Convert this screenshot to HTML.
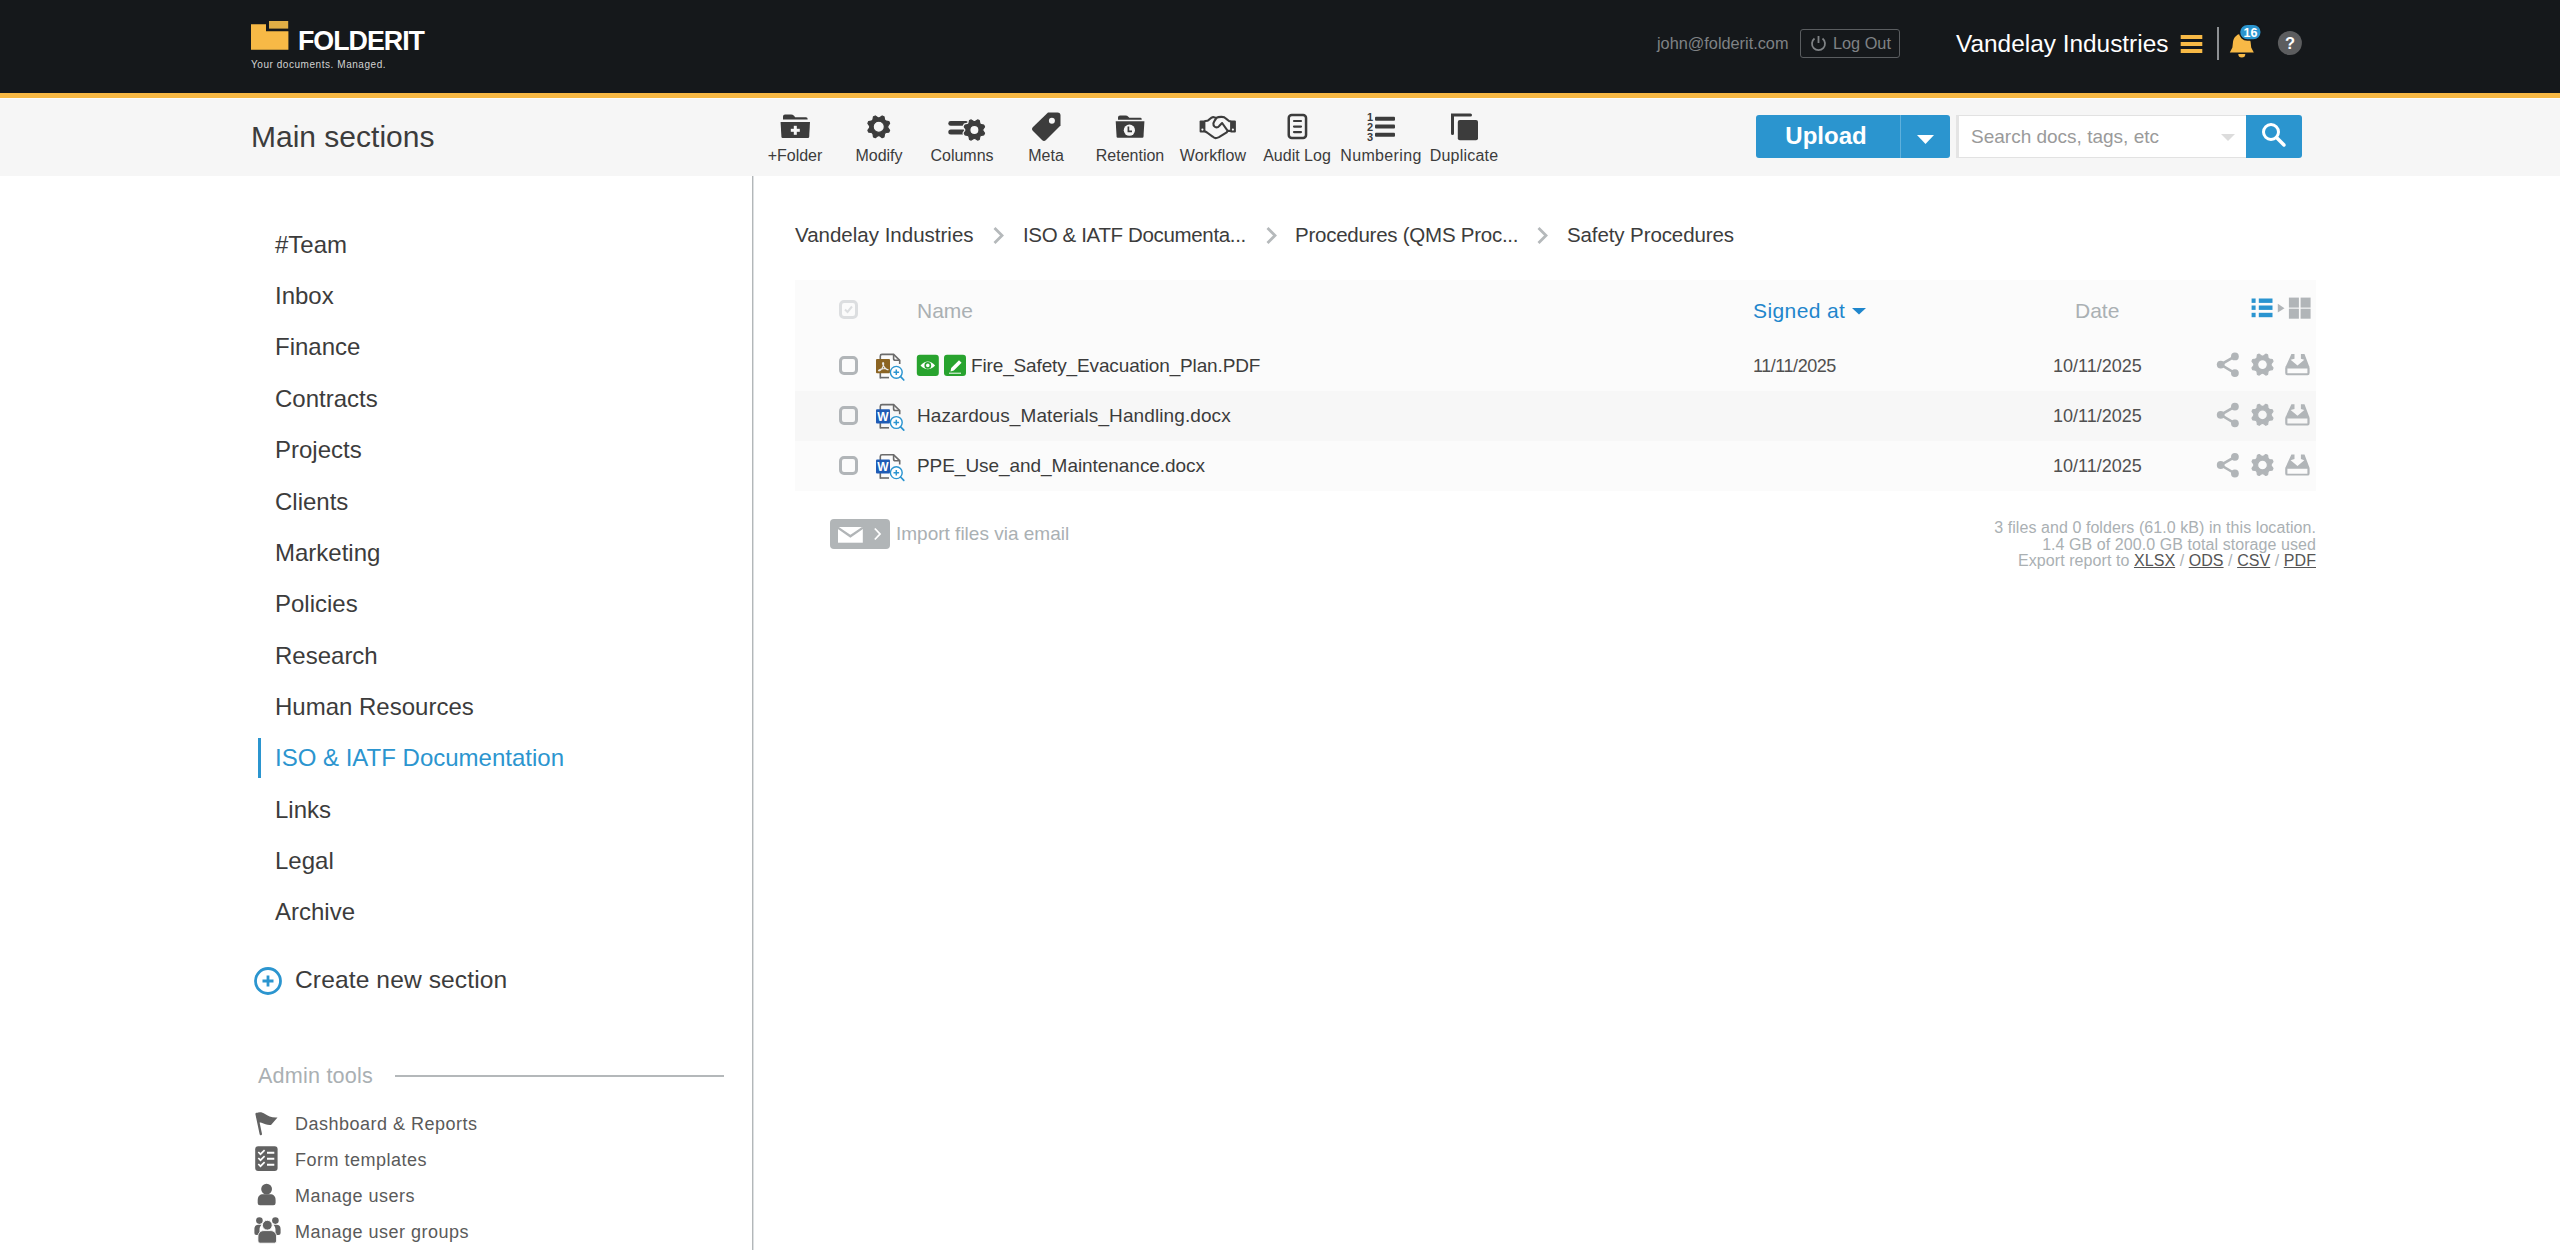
<!DOCTYPE html>
<html><head><meta charset="utf-8">
<style>
*{margin:0;padding:0;box-sizing:border-box}
html,body{width:2560px;height:1250px;overflow:hidden;background:#fff;font-family:"Liberation Sans",sans-serif;color:#3c3c3c}
.abs{position:absolute;white-space:pre}
#hdr{position:absolute;left:0;top:0;width:2560px;height:93px;background:#15181b}
#stripe{position:absolute;left:0;top:93px;width:2560px;height:5px;background:#f7b843}
#stripe2{position:absolute;left:0;top:98px;width:2560px;height:1px;background:#fbfdfd}
#tb{position:absolute;left:0;top:99px;width:2560px;height:77px;background:#f6f6f6}
#vdiv{position:absolute;left:752px;top:176px;width:2px;height:1074px;background:linear-gradient(90deg,#b3b7b9 50%,#dde0e2 50%)}
.side{position:absolute;left:275px;font-size:24px;line-height:30px;color:#3c3c3c;white-space:pre}
.tbl{position:absolute;font-size:16px;line-height:20px;color:#3c3c3c;text-align:center;width:84px;top:146px}
.tbi{position:absolute;top:108px;width:40px;height:36px}

.adm{left:295px;font-size:18px;line-height:24px;color:#5a5a5a;letter-spacing:0.5px}
.bc{top:223px;font-size:20.5px;line-height:24px;color:#3c3c3c}
.chev{top:226px;width:13px;height:19px}
.th{top:299px;font-size:21px;line-height:24px;color:#aab0b3}
.cb{left:839px;width:19px;height:19px;border:3px solid #b1b5b8;border-radius:5px}
.fn{font-size:19px;line-height:22px;color:#3c3c3c}
.dt{font-size:18px;line-height:22px;color:#505050}
.st{right:244px;text-align:right;font-size:16px;line-height:18px;color:#aab0b3;letter-spacing:0.07px}
.st u{color:#555;text-decoration:underline}
</style></head><body>
<div id="hdr"></div><div id="stripe"></div><div id="stripe2"></div><div id="tb"></div><div id="vdiv"></div>

<!-- logo -->
<div class="abs" style="left:298px;top:25px;font-size:26.8px;font-weight:700;color:#fff;line-height:32px;letter-spacing:-1px">FOLDERIT</div>
<div class="abs" style="left:251px;top:59px;font-size:10px;color:#d2d2d2;line-height:12px;letter-spacing:0.55px">Your documents. Managed.</div>

<!-- header right -->
<div class="abs" style="left:1657px;top:33px;font-size:16.3px;color:#7f8285;line-height:20px">john@folderit.com</div>
<div class="abs" style="left:1800px;top:29px;width:100px;height:29px;border:1.5px solid #5a5d60;border-radius:3px"></div>
<svg class="abs" style="left:1809px;top:34px" width="19" height="19" viewBox="0 0 19 19"><path d="M5.5 4.5A6.5 6.5 0 1 0 13.5 4.5" fill="none" stroke="#7f8285" stroke-width="1.8"/><path d="M9.5 2V9" stroke="#7f8285" stroke-width="1.8"/></svg>
<div class="abs" style="left:1833px;top:33px;font-size:16.3px;color:#7f8285;line-height:20px">Log Out</div>
<div class="abs" style="left:1956px;top:29px;font-size:24.4px;color:#fff;line-height:30px">Vandelay Industries</div>
<div class="abs" style="left:2217px;top:27px;width:1.5px;height:33px;background:#8d9093"></div>

<!-- toolbar -->
<div class="abs" style="left:251px;top:119px;font-size:30px;line-height:36px;color:#3c3c3c">Main sections</div>

<div class="tbl" style="left:753px">+Folder</div>
<div class="tbl" style="left:837px">Modify</div>
<div class="tbl" style="left:920px">Columns</div>
<div class="tbl" style="left:1004px">Meta</div>
<div class="tbl" style="left:1088px">Retention</div>
<div class="tbl" style="left:1171px;letter-spacing:0.1px">Workflow</div>
<div class="tbl" style="left:1255px">Audit Log</div>
<div class="tbl" style="left:1339px;letter-spacing:0.35px">Numbering</div>
<div class="tbl" style="left:1422px;letter-spacing:0.2px">Duplicate</div>

<!-- upload/search -->
<div class="abs" style="left:1756px;top:115px;width:194px;height:43px;background:#2b95cf;border-radius:3px"></div>
<div class="abs" style="left:1900px;top:115px;width:1px;height:43px;background:#5fb0dc"></div>
<div class="abs" style="left:1754px;top:121px;width:144px;text-align:center;font-size:24px;font-weight:700;color:#fff;line-height:30px">Upload</div>
<svg class="abs" style="left:1917px;top:135px" width="17" height="10" viewBox="0 0 17 10"><path d="M0 0H17L8.5 9Z" fill="#fff"/></svg>
<div class="abs" style="left:1956px;top:115px;width:291px;height:43px;background:#fff;border:1px solid #e2e2e2;border-left:3px solid #e4e4e4"></div>
<div class="abs" style="left:1971px;top:125px;font-size:19px;color:#9a9a9a;line-height:24px">Search docs, tags, etc</div>
<svg class="abs" style="left:2221px;top:134px" width="14" height="8" viewBox="0 0 14 8"><path d="M0 0H14L7 7Z" fill="#dcdcdc"/></svg>
<div class="abs" style="left:2246px;top:115px;width:56px;height:43px;background:#2b95cf;border-radius:0 3px 3px 0"></div>
<svg class="abs" style="left:2260px;top:121px" width="28" height="28" viewBox="0 0 28 28"><circle cx="11" cy="11" r="7.5" fill="none" stroke="#fff" stroke-width="3"/><path d="M16.5 16.5L24 24" stroke="#fff" stroke-width="3.5" stroke-linecap="round"/></svg>

<!-- sidebar -->
<div class="side" style="top:230px">#Team</div>
<div class="side" style="top:281px">Inbox</div>
<div class="side" style="top:332px">Finance</div>
<div class="side" style="top:384px">Contracts</div>
<div class="side" style="top:435px">Projects</div>
<div class="side" style="top:487px">Clients</div>
<div class="side" style="top:538px">Marketing</div>
<div class="side" style="top:589px">Policies</div>
<div class="side" style="top:641px">Research</div>
<div class="side" style="top:692px">Human Resources</div>
<div class="abs" style="left:258px;top:738px;width:3px;height:40px;background:#2b95cf"></div>
<div class="side" style="top:743px;color:#2b95cf">ISO &amp; IATF Documentation</div>
<div class="side" style="top:795px">Links</div>
<div class="side" style="top:846px">Legal</div>
<div class="side" style="top:897px">Archive</div>


<!-- sidebar lower -->
<svg class="abs" style="left:254px;top:967px" width="28" height="28" viewBox="0 0 28 28"><circle cx="14" cy="14" r="12.5" fill="none" stroke="#2b95cf" stroke-width="2.8"/><path d="M14 8.5V19.5M8.5 14H19.5" stroke="#2b95cf" stroke-width="2.8"/></svg>
<div class="abs" style="left:295px;top:965px;font-size:24.6px;line-height:30px;color:#3c3c3c;letter-spacing:0.1px">Create new section</div>
<div class="abs" style="left:258px;top:1063px;font-size:21.6px;line-height:26px;color:#aab0b3;letter-spacing:0.2px">Admin tools</div>
<div class="abs" style="left:395px;top:1074.5px;width:329px;height:2px;background:#b4b8ba"></div>
<div class="abs adm" style="top:1112px">Dashboard &amp; Reports</div>
<div class="abs adm" style="top:1148px">Form templates</div>
<div class="abs adm" style="top:1184px">Manage users</div>
<div class="abs adm" style="top:1220px">Manage user groups</div>

<!-- breadcrumb -->
<div class="abs bc" style="left:795px">Vandelay Industries</div>
<div class="abs bc" style="left:1023px;letter-spacing:-0.35px">ISO &amp; IATF Documenta...</div>
<div class="abs bc" style="left:1295px;letter-spacing:-0.25px">Procedures (QMS Proc...</div>
<div class="abs bc" style="left:1567px;letter-spacing:-0.1px">Safety Procedures</div>
<svg class="abs chev" style="left:992px"><path d="M2.5 2L10 9.5L2.5 17" fill="none" stroke="#b5b9bb" stroke-width="2.8"/></svg>
<svg class="abs chev" style="left:1265px"><path d="M2.5 2L10 9.5L2.5 17" fill="none" stroke="#b5b9bb" stroke-width="2.8"/></svg>
<svg class="abs chev" style="left:1536px"><path d="M2.5 2L10 9.5L2.5 17" fill="none" stroke="#b5b9bb" stroke-width="2.8"/></svg>

<!-- table -->
<div class="abs" style="left:795px;top:280px;width:1521px;height:211px;background:#fbfbfb"></div>
<div class="abs" style="left:795px;top:391px;width:1521px;height:50px;background:#f7f7f7"></div>
<div class="abs" style="left:839px;top:300px;width:19px;height:19px;border:3px solid #dcdee0;border-radius:5px"></div>
<svg class="abs" style="left:842px;top:303px" width="13" height="13" viewBox="0 0 13 13"><path d="M3 6.5L5.5 9L10 3.5" fill="none" stroke="#dcdee0" stroke-width="2"/></svg>
<div class="abs th" style="left:917px">Name</div>
<div class="abs th" style="left:1753px;color:#1f86cc;letter-spacing:0.4px">Signed at</div>
<svg class="abs" style="left:1852px;top:308px" width="14" height="7" viewBox="0 0 14 7"><path d="M0 0H14L7 6.5Z" fill="#1f86cc"/></svg>
<div class="abs th" style="left:2075px">Date</div>

<div class="abs cb" style="top:356px"></div>
<div class="abs cb" style="top:406px"></div>
<div class="abs cb" style="top:456px"></div>

<div class="abs fn" style="left:971px;top:355px;letter-spacing:-0.14px">Fire_Safety_Evacuation_Plan.PDF</div>
<div class="abs fn" style="left:917px;top:405px;letter-spacing:0.1px">Hazardous_Materials_Handling.docx</div>
<div class="abs fn" style="left:917px;top:455px;letter-spacing:-0.05px">PPE_Use_and_Maintenance.docx</div>

<div class="abs dt" style="left:1753px;top:355px;letter-spacing:-0.45px">11/11/2025</div>
<div class="abs dt" style="left:2053px;top:355px">10/11/2025</div>
<div class="abs dt" style="left:2053px;top:405px">10/11/2025</div>
<div class="abs dt" style="left:2053px;top:455px">10/11/2025</div>

<!-- import email -->
<div class="abs" style="left:830px;top:519px;width:60px;height:30px;background:#b1b5b7;border-radius:4px"></div>
<svg class="abs" style="left:837px;top:526px" width="45" height="17" viewBox="0 0 45 17"><rect x="1" y="1" width="24.8" height="15.7" fill="#fff"/><path d="M0.8 1.6L13.4 10.3L26 1.6" fill="none" stroke="#b1b5b7" stroke-width="2.3"/><path d="M37.8 2.5L43 8L37.8 13.5" fill="none" stroke="#fff" stroke-width="1.8"/></svg>
<div class="abs" style="left:896px;top:523px;font-size:19px;line-height:22px;color:#aab0b3">Import files via email</div>

<div class="abs st" style="top:519px">3 files and 0 folders (61.0 kB) in this location.</div>
<div class="abs st" style="top:535.6px">1.4 GB of 200.0 GB total storage used</div>
<div class="abs st" style="top:552.2px">Export report to <u>XLSX</u> / <u>ODS</u> / <u>CSV</u> / <u>PDF</u></div>
<!--ICONS-->
<svg id="ov" class="abs" style="left:0;top:0" width="2560" height="1250" viewBox="0 0 2560 1250"><path d="M251 24.2H266V31.2H288.4V49.7H251Z" fill="#f7b946"/><rect x="269" y="21" width="19.2" height="7.6" fill="#dfad45"/><g fill="#3c3c3c"><path d="M783 119.6V116.4Q783 114.4 785 114.4H791Q792.8 114.4 794 115.8L795.2 117.2H806Q807.6 117.2 807.6 118.8V119.6Z"/><path d="M780.6 122H810L809.2 136.8Q809.1 138 808 138H782.6Q781.5 138 781.4 136.8Z"/><rect x="793.8" y="125.8" width="3" height="9" fill="#f6f6f6"/><rect x="790.8" y="128.8" width="9" height="3" fill="#f6f6f6"/><path fill-rule="evenodd" stroke="#3c3c3c" stroke-width="1.2" stroke-linejoin="round" d="M879.98 117.48L882.18 115.93L884.01 116.69L884.47 119.34A2.2 2.2 0 0 0 886.21 121.08L888.86 121.54L889.62 123.37L888.07 125.57A2.2 2.2 0 0 0 888.07 128.03L889.62 130.23L888.86 132.06L886.21 132.52A2.2 2.2 0 0 0 884.47 134.26L884.01 136.91L882.18 137.67L879.98 136.12A2.2 2.2 0 0 0 877.52 136.12L875.32 137.67L873.49 136.91L873.03 134.26A2.2 2.2 0 0 0 871.29 132.52L868.64 132.06L867.88 130.23L869.43 128.03A2.2 2.2 0 0 0 869.43 125.57L867.88 123.37L868.64 121.54L871.29 121.08A2.2 2.2 0 0 0 873.03 119.34L873.49 116.69L875.32 115.93L877.52 117.48A2.2 2.2 0 0 0 879.98 117.48ZM884.35 126.80A5.6 5.6 0 1 0 873.15 126.80A5.6 5.6 0 1 0 884.35 126.80Z"/><rect x="948.3" y="121" width="20" height="4.8" rx="2.4"/><rect x="948.3" y="129.6" width="18" height="5" rx="2.5"/><path fill-rule="evenodd" stroke="#f6f6f6" stroke-width="3.6" stroke-linejoin="round" d="M975.55 121.28L977.59 119.89L979.29 120.60L979.76 123.02A2.0 2.0 0 0 0 981.38 124.64L983.80 125.11L984.51 126.81L983.12 128.85A2.0 2.0 0 0 0 983.12 131.15L984.51 133.19L983.80 134.89L981.38 135.36A2.0 2.0 0 0 0 979.76 136.98L979.29 139.40L977.59 140.11L975.55 138.72A2.0 2.0 0 0 0 973.25 138.72L971.21 140.11L969.51 139.40L969.04 136.98A2.0 2.0 0 0 0 967.42 135.36L965.00 134.89L964.29 133.19L965.68 131.15A2.0 2.0 0 0 0 965.68 128.85L964.29 126.81L965.00 125.11L967.42 124.64A2.0 2.0 0 0 0 969.04 123.02L969.51 120.60L971.21 119.89L973.25 121.28A2.0 2.0 0 0 0 975.55 121.28ZM979.00 130.00A4.6 4.6 0 1 0 969.80 130.00A4.6 4.6 0 1 0 979.00 130.00Z"/><path fill-rule="evenodd" stroke="#3c3c3c" stroke-width="1.2" stroke-linejoin="round" d="M975.55 121.28L977.59 119.89L979.29 120.60L979.76 123.02A2.0 2.0 0 0 0 981.38 124.64L983.80 125.11L984.51 126.81L983.12 128.85A2.0 2.0 0 0 0 983.12 131.15L984.51 133.19L983.80 134.89L981.38 135.36A2.0 2.0 0 0 0 979.76 136.98L979.29 139.40L977.59 140.11L975.55 138.72A2.0 2.0 0 0 0 973.25 138.72L971.21 140.11L969.51 139.40L969.04 136.98A2.0 2.0 0 0 0 967.42 135.36L965.00 134.89L964.29 133.19L965.68 131.15A2.0 2.0 0 0 0 965.68 128.85L964.29 126.81L965.00 125.11L967.42 124.64A2.0 2.0 0 0 0 969.04 123.02L969.51 120.60L971.21 119.89L973.25 121.28A2.0 2.0 0 0 0 975.55 121.28ZM979.00 130.00A4.6 4.6 0 1 0 969.80 130.00A4.6 4.6 0 1 0 979.00 130.00Z"/><path d="M1048 112.5H1057.5Q1060.5 112.5 1060.5 115.5V125.5L1046 140Q1044 142 1042 140L1033 131Q1031 129 1033 127Z"/><circle cx="1051.9" cy="120.7" r="3" fill="#f6f6f6"/><path d="M1118 119.8V117.6Q1118 115.6 1120 115.6H1125.5Q1127.3 115.6 1128.3 116.8L1129.3 117.8H1140.3Q1141.7 117.8 1141.7 119.2V119.8Z"/><path d="M1115.7 121.2H1144.4L1143.5 136.8Q1143.4 137.8 1142.4 137.8H1117.7Q1116.7 137.8 1116.6 136.8Z"/><circle cx="1129.4" cy="130.2" r="5.6" fill="#f6f6f6"/><path d="M1128.4 126.6V131.4H1132" fill="none" stroke="#3c3c3c" stroke-width="1.7"/><g transform="translate(1196 112)"><rect x="3.6" y="8.4" width="5.8" height="12.1" rx="1"/><rect x="34.1" y="8.4" width="5.8" height="12.1" rx="1"/><circle cx="6.4" cy="17.6" r="1.1" fill="#f6f6f6"/><circle cx="36.9" cy="17.6" r="1.1" fill="#f6f6f6"/><path fill="none" stroke="#3c3c3c" stroke-width="2.1" stroke-linejoin="round" stroke-linecap="round" d="M9.2 9L11.5 8.7C13 8.5 14.5 5.2 17 5.1L20.5 5.9C22 4.8 24 4.9 25.6 4.9C27.5 4.9 29 5.5 30 6.6L33.3 9.2H34.3M20.5 5.9C19 8 17.5 10 17.4 11.5C17.3 14 19 15.4 20.5 15.4C21.8 15.4 22.6 14.8 23.4 13.8L26.1 11L31.7 18.9H34.3M9.2 19.5L11 20.5L16.6 24.6C17.5 25.5 18.5 26.1 19.5 26.1C21 26.1 22 25.6 23 25.1L30.7 20.3L31.7 18.9"/></g><rect x="1288.75" y="115.05" width="17.3" height="23" rx="3" fill="none" stroke="#3c3c3c" stroke-width="2.5"/><path d="M1294 121H1301M1294 126.6H1301M1294 132.1H1301" stroke="#3c3c3c" stroke-width="2.2" stroke-linecap="round"/><rect x="1375" y="116.7" width="20" height="4" rx="1"/><rect x="1375" y="124.6" width="20" height="4" rx="1"/><rect x="1375" y="132.8" width="20" height="4" rx="1"/><text x="1370" y="120.8" font-family="Liberation Sans" font-weight="700" font-size="11" text-anchor="middle">1</text><text x="1370" y="130.5" font-family="Liberation Sans" font-weight="700" font-size="11" text-anchor="middle">2</text><text x="1370" y="140.5" font-family="Liberation Sans" font-weight="700" font-size="11" text-anchor="middle">3</text><path d="M1452.5 133.6V115H1470.5" fill="none" stroke="#3c3c3c" stroke-width="3" stroke-linecap="round"/><rect x="1457.8" y="120.1" width="20.2" height="20.1" rx="2"/></g><g fill="#2a94d0"><rect x="2251.6" y="298.5" width="4" height="4.4"/><rect x="2251.6" y="305.5" width="4" height="4.4"/><rect x="2251.6" y="312.8" width="4" height="4.4"/><rect x="2258.8" y="298.5" width="13.7" height="4.4"/><rect x="2258.8" y="305.5" width="13.7" height="4.4"/><rect x="2258.8" y="312.8" width="13.7" height="4.4"/></g><path d="M2277.8 303.8L2284.5 308.2L2277.8 312.6Z" fill="#b1b5b8"/><g fill="#b1b5b8"><rect x="2288.9" y="297.6" width="10" height="10"/><rect x="2300.6" y="297.6" width="10" height="10"/><rect x="2288.9" y="308.7" width="10" height="10"/><rect x="2300.6" y="308.7" width="10" height="10"/></g><g transform="translate(0 0)"><g fill="#b1b5b8"><circle cx="2234.9" cy="356.4" r="3.9"/><circle cx="2220.7" cy="364.6" r="3.9"/><circle cx="2234.9" cy="373.1" r="3.9"/></g><path d="M2234.9 356.4L2220.7 364.6L2234.9 373.1" fill="none" stroke="#b1b5b8" stroke-width="2.6"/><path fill="#b1b5b8" fill-rule="evenodd" stroke="#b1b5b8" stroke-width="1.2" stroke-linejoin="round" d="M2263.67 355.68L2265.81 354.11L2267.58 354.84L2267.98 357.46A2.1 2.1 0 0 0 2269.64 359.12L2272.26 359.52L2272.99 361.29L2271.42 363.43A2.1 2.1 0 0 0 2271.42 365.77L2272.99 367.91L2272.26 369.68L2269.64 370.08A2.1 2.1 0 0 0 2267.98 371.74L2267.58 374.36L2265.81 375.09L2263.67 373.52A2.1 2.1 0 0 0 2261.33 373.52L2259.19 375.09L2257.42 374.36L2257.02 371.74A2.1 2.1 0 0 0 2255.36 370.08L2252.74 369.68L2252.01 367.91L2253.58 365.77A2.1 2.1 0 0 0 2253.58 363.43L2252.01 361.29L2252.74 359.52L2255.36 359.12A2.1 2.1 0 0 0 2257.02 357.46L2257.42 354.84L2259.19 354.11L2261.33 355.68A2.1 2.1 0 0 0 2263.67 355.68ZM2267.40 364.60A4.9 4.9 0 1 0 2257.60 364.60A4.9 4.9 0 1 0 2267.40 364.60Z"/><path fill="#b1b5b8" d="M2291.4 354H2294.5V358.7L2290.6 359.8L2297.5 365.6L2304.3 359.8L2300.9 358.7V354H2304.5L2309.4 367H2285.5Z"/><path fill="#b1b5b8" fill-rule="evenodd" d="M2287.2 366H2307.7Q2309.6 366 2309.6 368V373Q2309.6 375.2 2307.6 375.2H2287.2Q2285.2 375.2 2285.2 373V368Q2285.2 366 2287.2 366ZM2287.4 368.4V373.3H2307.4V368.4Z"/><path d="M880.3 378.4V356Q880.3 354.4 882 354.4H893.6L899.7 360.3V364" fill="none" stroke="#6b6b6b" stroke-width="1.6"/><path d="M893.6 354.4V358.5Q893.6 360.3 895.4 360.3H899.7" fill="none" stroke="#6b6b6b" stroke-width="1.6"/><path d="M880.3 377.6H889" stroke="#6b6b6b" stroke-width="1.6"/><rect x="876" y="359" width="14" height="14.2" rx="1" fill="#8b6423"/><path d="M883 362.5C882 363 883 366 885.5 368.5C886.5 369.5 888.5 370 888.5 369.5M883 362.5C884 362.5 884 365 882 368.5C881 370 879 371.5 878.5 370.5C878.5 369.5 883 368.5 886 368.5" fill="none" stroke="#e9e9e9" stroke-width="1.2"/><circle cx="896.3" cy="372.3" r="5.9" fill="#fff" stroke="#2a94d0" stroke-width="1.4"/><path d="M893.5 372.3H899.1M896.3 369.5V375.1" stroke="#2a94d0" stroke-width="1.5"/><path d="M900.6 376.6L903.8 380" stroke="#2a94d0" stroke-width="1.7" stroke-linecap="round"/></g><g transform="translate(0 50.2)"><g fill="#b1b5b8"><circle cx="2234.9" cy="356.4" r="3.9"/><circle cx="2220.7" cy="364.6" r="3.9"/><circle cx="2234.9" cy="373.1" r="3.9"/></g><path d="M2234.9 356.4L2220.7 364.6L2234.9 373.1" fill="none" stroke="#b1b5b8" stroke-width="2.6"/><path fill="#b1b5b8" fill-rule="evenodd" stroke="#b1b5b8" stroke-width="1.2" stroke-linejoin="round" d="M2263.67 355.68L2265.81 354.11L2267.58 354.84L2267.98 357.46A2.1 2.1 0 0 0 2269.64 359.12L2272.26 359.52L2272.99 361.29L2271.42 363.43A2.1 2.1 0 0 0 2271.42 365.77L2272.99 367.91L2272.26 369.68L2269.64 370.08A2.1 2.1 0 0 0 2267.98 371.74L2267.58 374.36L2265.81 375.09L2263.67 373.52A2.1 2.1 0 0 0 2261.33 373.52L2259.19 375.09L2257.42 374.36L2257.02 371.74A2.1 2.1 0 0 0 2255.36 370.08L2252.74 369.68L2252.01 367.91L2253.58 365.77A2.1 2.1 0 0 0 2253.58 363.43L2252.01 361.29L2252.74 359.52L2255.36 359.12A2.1 2.1 0 0 0 2257.02 357.46L2257.42 354.84L2259.19 354.11L2261.33 355.68A2.1 2.1 0 0 0 2263.67 355.68ZM2267.40 364.60A4.9 4.9 0 1 0 2257.60 364.60A4.9 4.9 0 1 0 2267.40 364.60Z"/><path fill="#b1b5b8" d="M2291.4 354H2294.5V358.7L2290.6 359.8L2297.5 365.6L2304.3 359.8L2300.9 358.7V354H2304.5L2309.4 367H2285.5Z"/><path fill="#b1b5b8" fill-rule="evenodd" d="M2287.2 366H2307.7Q2309.6 366 2309.6 368V373Q2309.6 375.2 2307.6 375.2H2287.2Q2285.2 375.2 2285.2 373V368Q2285.2 366 2287.2 366ZM2287.4 368.4V373.3H2307.4V368.4Z"/><path d="M880.3 378.4V356Q880.3 354.4 882 354.4H893.6L899.7 360.3V364" fill="none" stroke="#6b6b6b" stroke-width="1.6"/><path d="M893.6 354.4V358.5Q893.6 360.3 895.4 360.3H899.7" fill="none" stroke="#6b6b6b" stroke-width="1.6"/><path d="M880.3 377.6H889" stroke="#6b6b6b" stroke-width="1.6"/><rect x="876" y="359" width="14" height="14.2" rx="1" fill="#1f5bb5"/><text x="883" y="371" font-family="Liberation Sans" font-weight="700" font-size="12" fill="#fff" text-anchor="middle">W</text><circle cx="896.3" cy="372.3" r="5.9" fill="#fff" stroke="#2a94d0" stroke-width="1.4"/><path d="M893.5 372.3H899.1M896.3 369.5V375.1" stroke="#2a94d0" stroke-width="1.5"/><path d="M900.6 376.6L903.8 380" stroke="#2a94d0" stroke-width="1.7" stroke-linecap="round"/></g><g transform="translate(0 100.4)"><g fill="#b1b5b8"><circle cx="2234.9" cy="356.4" r="3.9"/><circle cx="2220.7" cy="364.6" r="3.9"/><circle cx="2234.9" cy="373.1" r="3.9"/></g><path d="M2234.9 356.4L2220.7 364.6L2234.9 373.1" fill="none" stroke="#b1b5b8" stroke-width="2.6"/><path fill="#b1b5b8" fill-rule="evenodd" stroke="#b1b5b8" stroke-width="1.2" stroke-linejoin="round" d="M2263.67 355.68L2265.81 354.11L2267.58 354.84L2267.98 357.46A2.1 2.1 0 0 0 2269.64 359.12L2272.26 359.52L2272.99 361.29L2271.42 363.43A2.1 2.1 0 0 0 2271.42 365.77L2272.99 367.91L2272.26 369.68L2269.64 370.08A2.1 2.1 0 0 0 2267.98 371.74L2267.58 374.36L2265.81 375.09L2263.67 373.52A2.1 2.1 0 0 0 2261.33 373.52L2259.19 375.09L2257.42 374.36L2257.02 371.74A2.1 2.1 0 0 0 2255.36 370.08L2252.74 369.68L2252.01 367.91L2253.58 365.77A2.1 2.1 0 0 0 2253.58 363.43L2252.01 361.29L2252.74 359.52L2255.36 359.12A2.1 2.1 0 0 0 2257.02 357.46L2257.42 354.84L2259.19 354.11L2261.33 355.68A2.1 2.1 0 0 0 2263.67 355.68ZM2267.40 364.60A4.9 4.9 0 1 0 2257.60 364.60A4.9 4.9 0 1 0 2267.40 364.60Z"/><path fill="#b1b5b8" d="M2291.4 354H2294.5V358.7L2290.6 359.8L2297.5 365.6L2304.3 359.8L2300.9 358.7V354H2304.5L2309.4 367H2285.5Z"/><path fill="#b1b5b8" fill-rule="evenodd" d="M2287.2 366H2307.7Q2309.6 366 2309.6 368V373Q2309.6 375.2 2307.6 375.2H2287.2Q2285.2 375.2 2285.2 373V368Q2285.2 366 2287.2 366ZM2287.4 368.4V373.3H2307.4V368.4Z"/><path d="M880.3 378.4V356Q880.3 354.4 882 354.4H893.6L899.7 360.3V364" fill="none" stroke="#6b6b6b" stroke-width="1.6"/><path d="M893.6 354.4V358.5Q893.6 360.3 895.4 360.3H899.7" fill="none" stroke="#6b6b6b" stroke-width="1.6"/><path d="M880.3 377.6H889" stroke="#6b6b6b" stroke-width="1.6"/><rect x="876" y="359" width="14" height="14.2" rx="1" fill="#1f5bb5"/><text x="883" y="371" font-family="Liberation Sans" font-weight="700" font-size="12" fill="#fff" text-anchor="middle">W</text><circle cx="896.3" cy="372.3" r="5.9" fill="#fff" stroke="#2a94d0" stroke-width="1.4"/><path d="M893.5 372.3H899.1M896.3 369.5V375.1" stroke="#2a94d0" stroke-width="1.5"/><path d="M900.6 376.6L903.8 380" stroke="#2a94d0" stroke-width="1.7" stroke-linecap="round"/></g><rect x="916.8" y="354.8" width="22" height="21.2" rx="3" fill="#28a32e"/><rect x="944" y="354.8" width="22" height="21.2" rx="3" fill="#28a32e"/><path d="M920.5 365.4Q927.8 357.8 935.1 365.4Q927.8 373 920.5 365.4Z" fill="#fff"/><circle cx="927.8" cy="365.4" r="2.6" fill="none" stroke="#28a32e" stroke-width="1.6"/><path d="M950.5 371.5L951.2 368L959 360.2L961.6 362.8L953.8 370.6Z" fill="#fff"/><path d="M949 373.2H961" stroke="#fff" stroke-width="1"/><g fill="#626262"><path d="M256 1113.5C259 1111.5 262 1112 265 1114C268 1116 272 1118 277.5 1117.5L271 1125C267.5 1125.5 264.5 1123.8 261.5 1122.8C260 1122.3 258.8 1122.5 258 1123Z"/><path d="M256.6 1114L260.8 1134" stroke="#626262" stroke-width="2.4" stroke-linecap="round"/><rect x="255.2" y="1146.2" width="22.4" height="24.8" rx="3"/></g><path d="M258.3 1152L260.5 1154.2L264.6 1150.2M258.3 1158L260.5 1160.2L264.6 1156.2M258.3 1164L260.5 1166.2L264.6 1162.2" fill="none" stroke="#fff" stroke-width="1.7"/><path d="M267 1152.7H274.3M267 1158.8H274.3M267 1164.8H274.3" stroke="#fff" stroke-width="2"/><g fill="#626262"><circle cx="266.6" cy="1189.1" r="5.4"/><path d="M257.7 1203V1200C257.7 1196 260 1194.2 263 1194.2H270.3C273.3 1194.2 275.6 1196 275.6 1200V1203Q275.6 1205.2 273.4 1205.2H259.9Q257.7 1205.2 257.7 1203Z"/><circle cx="259.4" cy="1220.6" r="3.3"/><circle cx="275.4" cy="1220.6" r="3.3"/><path d="M254.4 1233V1229C254.4 1226.2 256 1224.8 258.5 1224.8H261.5C260 1226.5 259.5 1228 259.5 1230V1235H256.4Q254.4 1235 254.4 1233Z"/><path d="M280.6 1233V1229C280.6 1226.2 279 1224.8 276.5 1224.8H273.5C275 1226.5 275.5 1228 275.5 1230V1235H278.6Q280.6 1235 280.6 1233Z"/><circle cx="267.3" cy="1225.2" r="4.9" stroke="#fff" stroke-width="0.9"/><path d="M257.9 1241V1237C257.9 1233 260.5 1230.6 264 1230.6H270.6C274.1 1230.6 276.6 1233 276.6 1237V1241Q276.6 1243.2 274.4 1243.2H260.1Q257.9 1243.2 257.9 1241Z" stroke="#fff" stroke-width="0.9"/></g><path d="M2241.8 33.5C2238 33.5 2233.5 37 2233 42L2232.4 47.5L2229.8 52.6H2253.8L2251.2 47.5L2250.6 42C2250.1 37 2245.6 33.5 2241.8 33.5Z" fill="#f7b946"/><path d="M2238.3 54A3.5 3.5 0 0 0 2245.3 54Z" fill="#f7b946"/><rect x="2239.5" y="24.2" width="21.8" height="15.8" rx="7.9" fill="#2b95cf" stroke="#15181b" stroke-width="1.5"/><text x="2250.4" y="37" font-family="Liberation Sans" font-weight="700" font-size="12.5" fill="#fff" text-anchor="middle">16</text><circle cx="2289.9" cy="43" r="12" fill="#5c5d5f"/><text x="2290.1" y="49" font-family="Liberation Sans" font-weight="700" font-size="16.5" fill="#ffffff" text-anchor="middle">?</text><path d="M2180.7 37H2202.3M2180.7 44H2202.3M2180.7 51H2202.3" stroke="#f7b946" stroke-width="4"/></svg>
</body></html>
